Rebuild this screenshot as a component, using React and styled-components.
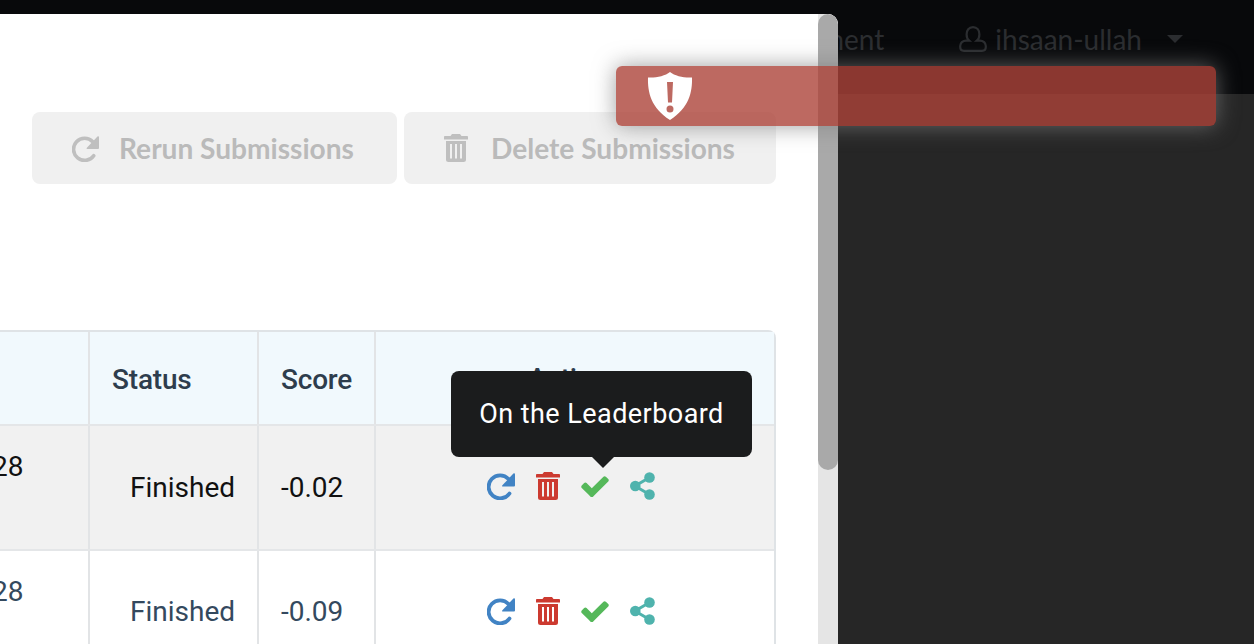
import React from "react";
import styled, { createGlobalStyle } from "styled-components";

const GlobalStyle = createGlobalStyle`
  html, body {
    margin: 0;
    padding: 0;
    background: #262626;
  }
  * {
    box-sizing: border-box;
  }
`;

const Page = styled.div`
  position: relative;
  width: 1254px;
  height: 644px;
  overflow: hidden;
  background: #262626;
`;

const Navbar = styled.div`
  display: flex;
  align-items: center;
  justify-content: flex-end;
  height: 94px;
  padding: 0 71px 16px 0;
  background: #08090b;
  color: #2b2d30;
  font-family: Lato, sans-serif;
  font-size: 28px;
`;

const NavText = styled.span`
  margin-right: 75px;
`;

const NavUser = styled.div`
  display: flex;
  align-items: center;
  gap: 8px;
  margin-right: 25px;
`;

const Caret = styled.span`
  width: 0;
  height: 0;
  border-left: 8px solid transparent;
  border-right: 8px solid transparent;
  border-top: 8px solid #2b2d30;
`;

const Modal = styled.div`
  position: absolute;
  top: 14px;
  left: 0;
  width: 838px;
  height: 630px;
  display: flex;
  background: #fff;
  border-top-right-radius: 10px;
  overflow: hidden;
`;

const Content = styled.div`
  width: 818px;
  flex-shrink: 0;
  padding-top: 98px;
`;

const Track = styled.div`
  width: 20px;
  background: #e5e5e5;
`;

const Thumb = styled.div`
  height: 456px;
  background: #a9a9a9;
  border-radius: 10px;
`;

const ButtonRow = styled.div`
  display: flex;
  justify-content: flex-end;
  gap: 7px;
  padding-right: 42px;
`;

const GhostButton = styled.div`
  display: flex;
  align-items: center;
  gap: ${(p) => p.$gap}px;
  width: ${(p) => p.$width}px;
  height: 72px;
  padding-left: 40px;
  border-radius: 8px;
  background: #f0f0f0;
  color: #bababa;
  font-family: Lato, sans-serif;
  font-size: 28.1px;
  font-weight: 700;
`;

const Table = styled.div`
  width: 776px;
  margin-top: 146px;
  border-top: 2px solid #dfe3e6;
  border-right: 2px solid #dfe3e6;
  border-top-right-radius: 8px;
  font-family: Roboto, sans-serif;
  font-size: 28px;
`;

const Row = styled.div`
  display: grid;
  grid-template-columns: 90px 169px 117px 1fr;
  height: ${(p) => p.$height}px;
  background: ${(p) => p.$bg};
  color: ${(p) => p.$color};
  border-bottom: 2px solid #e4e6e8;
`;

const Cell = styled.div`
  display: flex;
  align-items: center;
  border-right: 2px solid #e2e4e6;
  padding-left: ${(p) => p.$pad ?? 22}px;
  padding-bottom: ${(p) => p.$lift ?? 0}px;
`;

const HeadCell = styled(Cell)`
  font-weight: 500;
  color: #2e3d4d;
  padding-top: 2px;
  letter-spacing: -0.2px;
`;

const ActionsHead = styled(HeadCell)`
  justify-content: center;
  border-right: none;
  padding-bottom: 2px;
`;

const DateCell = styled.div`
  border-right: 2px solid #e2e4e6;
  padding-top: 25px;
  line-height: 32px;
  text-indent: -8px;
`;

const ActionCell = styled.div`
  position: relative;
  display: flex;
  align-items: center;
  gap: 21px;
  padding: 0 0 4px 111px;
`;

const Icon = styled.svg`
  display: block;
  flex-shrink: 0;
  fill: ${(p) => p.$color};
`;

const Tooltip = styled.div`
  position: absolute;
  left: 75px;
  top: -55px;
  width: 301px;
  height: 86px;
  display: flex;
  align-items: center;
  justify-content: center;
  border-radius: 8px;
  background: #1b1c1d;
  color: #fff;
  font-size: 27px;
  letter-spacing: 0.45px;

  &::after {
    content: "";
    position: absolute;
    left: 141px;
    bottom: -11px;
    width: 0;
    height: 0;
    border-left: 11px solid transparent;
    border-right: 11px solid transparent;
    border-top: 11px solid #1b1c1d;
  }
`;

const Alert = styled.div`
  position: absolute;
  top: 66px;
  left: 616px;
  width: 600px;
  height: 60px;
  display: flex;
  align-items: center;
  padding-left: 31px;
  border-radius: 6px;
  background: rgba(173, 68, 57, 0.8);
  box-shadow: 0 0 22px rgba(125, 125, 125, 0.75);
`;

const RedoIcon = ({ size, color }) => (
  <Icon width={size} height={size} viewBox="0 0 28 28" $color={color}>
    <path
      d="M21.5 7A11.5 11.5 0 1 0 22.5 21.5"
      fill="none"
      stroke={color}
      strokeWidth="3.8"
      strokeLinecap="round"
    />
    <path d="M28 2.2V13.5Q28 14.6 27 14.6H15.8Q14.5 14.4 15.4 13.2L26.4 1.6Q27.8 .8 28 2.2Z" />
  </Icon>
);

const TrashIcon = ({ color }) => (
  <Icon width="24" height="28" viewBox="0 0 24 28" fillRule="evenodd" $color={color}>
    <path d="M8 0H16L17.5 2H23.2Q24 2 24 3V5.5H0V3Q0 2 .8 2H6.5Z" />
    <path d="M2 7H22V25.5Q22 28 19.5 28H4.5Q2 28 2 25.5ZM6 10V24.5H8V10ZM11 10V24.5H13V10ZM16 10V24.5H18V10Z" />
  </Icon>
);

const CheckIcon = ({ color }) => (
  <Icon width="28" height="22" viewBox="121 270 1550 1240" $color={color}>
    <path d="M1671 566q0 40-28 68l-724 724-136 136q-28 28-68 28t-68-28l-136-136-362-362q-28-28-28-68t28-68l136-136q28-28 68-28t68 28l294 295 656-657q28-28 68-28t68 28l136 136q28 28 28 68z" />
  </Icon>
);

const ShareIcon = ({ color }) => (
  <Icon width="25" height="28" viewBox="0 0 25 28" $color={color}>
    <path d="M19.5 5.5L5 14L19.5 22.5" fill="none" stroke={color} strokeWidth="3" />
    <circle cx="19.5" cy="5.5" r="5.3" />
    <circle cx="19.5" cy="22.5" r="5.3" />
    <circle cx="5.3" cy="14" r="5.3" />
  </Icon>
);

const UserIcon = () => (
  <svg width="28" height="26" viewBox="0 0 28 26" fill="none" stroke="#2b2d30" strokeWidth="2.2">
    <path d="M14 1.2C9.8 1.2 7.6 4.4 7.6 8.4C7.6 11 8.6 13.2 10.2 14.6H7C3.8 14.6 1.2 17 1.2 20V21C1.2 23.2 2.8 24.8 5 24.8H23C25.2 24.8 26.8 23.2 26.8 21V20C26.8 17 24.2 14.6 21 14.6H17.8C19.4 13.2 20.4 11 20.4 8.4C20.4 4.4 18.2 1.2 14 1.2Z" />
  </svg>
);

const ShieldIcon = () => (
  <svg width="46" height="48" viewBox="0 0 46 48" fillRule="evenodd">
    <path
      fill="#fff"
      d="M23 0C28 4 37 6 45 5.5C45.5 20 42 36 23 48C4 36 .5 20 1 5.5C9 6 18 4 23 0ZM20 10L21 30.5H25L26 10ZM23 33.5A3.5 3.5 0 1 0 23 40.5A3.5 3.5 0 1 0 23 33.5Z"
    />
  </svg>
);

const Actions = ({ tooltip }) => (
  <ActionCell>
    <RedoIcon size={28} color="#4183c4" />
    <TrashIcon color="#cc3a30" />
    <CheckIcon color="#55b85a" />
    <ShareIcon color="#4fb3ad" />
    {tooltip && <Tooltip>On the Leaderboard</Tooltip>}
  </ActionCell>
);

const App = () => (
  <Page>
    <GlobalStyle />
    <Navbar>
      <NavText>ment</NavText>
      <NavUser>
        <UserIcon />
        ihsaan-ullah
      </NavUser>
      <Caret />
    </Navbar>

    <Modal>
      <Content>
        <ButtonRow>
          <GhostButton $width={365} $gap={20}>
            <RedoIcon size={27} color="#bfbfbf" />
            Rerun Submissions
          </GhostButton>
          <GhostButton $width={372} $gap={23}>
            <TrashIcon color="#bfbfbf" />
            Delete Submissions
          </GhostButton>
        </ButtonRow>

        <Table>
          <Row $height={94} $bg="#f1f9fd">
            <HeadCell />
            <HeadCell>Status</HeadCell>
            <HeadCell>Score</HeadCell>
            <ActionsHead $pad={0}>Actions</ActionsHead>
          </Row>
          <Row $height={125} $bg="#f1f1f1" $color="#111">
            <DateCell>28</DateCell>
            <Cell $pad={40}>Finished</Cell>
            <Cell>-0.02</Cell>
            <Actions tooltip />
          </Row>
          <Row $height={125} $bg="#fff" $color="#34495e">
            <DateCell>28</DateCell>
            <Cell $pad={40} $lift={2}>Finished</Cell>
            <Cell $lift={2}>-0.09</Cell>
            <Actions />
          </Row>
        </Table>
      </Content>
      <Track>
        <Thumb />
      </Track>
    </Modal>

    <Alert>
      <ShieldIcon />
    </Alert>
  </Page>
);

export default App;
